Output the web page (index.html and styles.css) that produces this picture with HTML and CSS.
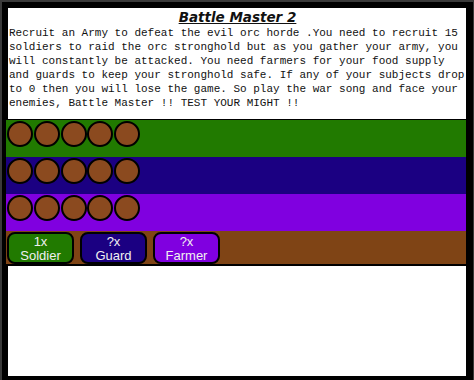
FILE: index.html
```html
<!DOCTYPE html>
<html>
<head>
<meta charset="utf-8">
<link rel="stylesheet" href="styles.css">
</head>
<body>
<div class="frame">
  <div class="intro">
    <h1 class="title">Battle Master 2</h1>
    <p class="story">Recruit an Army to defeat the evil orc horde .You need to recruit 15 soldiers to raid the orc stronghold but as you gather your army, you will constantly be attacked. You need farmers for your food supply and guards to keep your stronghold safe. If any of your subjects drop to 0 then you will lose the game. So play the war song and face your enemies, Battle Master !! TEST YOUR MIGHT !!</p>
  </div>
  <div class="game">
    <div class="band band-soldier">
      <span class="unit"></span><span class="unit"></span><span class="unit"></span><span class="unit"></span><span class="unit"></span>
    </div>
    <div class="band band-guard">
      <span class="unit"></span><span class="unit"></span><span class="unit"></span><span class="unit"></span><span class="unit"></span>
    </div>
    <div class="band band-farmer">
      <span class="unit"></span><span class="unit"></span><span class="unit"></span><span class="unit"></span><span class="unit"></span>
    </div>
    <div class="controls">
      <button class="btn btn-soldier">1x<br>Soldier</button>
      <button class="btn btn-guard">?x<br>Guard</button>
      <button class="btn btn-farmer">?x<br>Farmer</button>
    </div>
  </div>
  <div class="empty"></div>
</div>
</body>
</html>
```

FILE: styles.css
```css
html, body {
  margin: 0;
  padding: 0;
}
body {
  background: #3a3a3a;
  width: 474px;
  height: 380px;
  overflow: hidden;
  padding: 2px 0 0 2px;
  box-sizing: border-box;
}
.frame {
  width: 471px;
  height: 380px;
  box-sizing: border-box;
  border: 6px solid #000;
  border-right-width: 7px;
  background: #fff;
  display: flex;
  flex-direction: column;
}
.intro {
  padding: 0 0 9px 1px;
}
.title {
  margin: 0;
  height: 19px;
  line-height: 19px;
  text-align: center;
  font-family: "DejaVu Sans", sans-serif;
  font-size: 13.5px;
  font-weight: bold;
  font-style: italic;
  text-decoration: underline;
  color: #111;
}
.story {
  margin: 0;
  font-family: "Liberation Mono", monospace;
  font-size: 11px;
  line-height: 13.9px;
  color: #111;
}
.game {
  margin-left: -2px;
  border-top: 1px solid #000;
  border-bottom: 2px solid #000;
}
.band {
  height: 37px;
  box-sizing: border-box;
  padding: 1px 0 0 1px;
  display: flex;
  gap: 0.75px;
}
.band-soldier { background: #217a00; }
.band-guard { background: #1b0082; }
.band-farmer { background: #8000e0; }
.unit {
  width: 26px;
  height: 26px;
  box-sizing: border-box;
  border: 2px solid #000;
  border-radius: 50%;
  background: #8b4a1f;
}
.controls {
  background: #7f4415;
  height: 33px;
  box-sizing: border-box;
  padding: 1px 0 0 1px;
  display: flex;
  gap: 6px;
}
.btn {
  width: 67px;
  height: 32px;
  box-sizing: border-box;
  border: 2px solid #000;
  border-radius: 8px;
  padding: 1px 0 0;
  margin: 0;
  font-family: "Liberation Sans", Arial, sans-serif;
  font-size: 13px;
  line-height: 13.5px;
  color: #f0f0f0;
}
.btn-soldier { background: #217a00; }
.btn-guard { background: #1b0082; }
.btn-farmer { background: #8000e0; }
.empty {
  flex: 1;
}
```
